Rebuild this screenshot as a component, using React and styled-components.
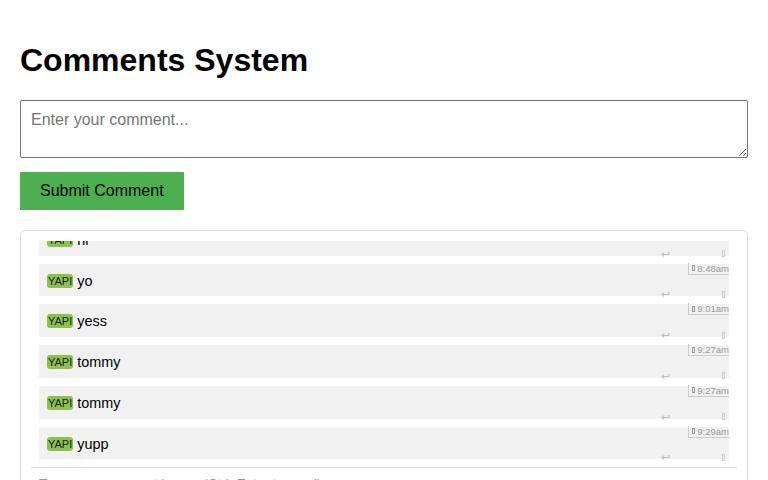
import React, { useEffect, useRef } from "react";
import styled, { createGlobalStyle } from "styled-components";

const GlobalStyle = createGlobalStyle`
  html, body {
    margin: 0;
    background: #fff;
  }
  body {
    padding: 20px;
    font-family: "Liberation Sans", Arial, sans-serif;
    color: #000;
  }
  * { box-sizing: border-box; }
`;

const comments = [
  { id: 1, user: "YAPI", text: "hello", time: "8:40am" },
  { id: 2, user: "YAPI", text: "hi", time: "8:45am" },
  { id: 3, user: "YAPI", text: "yo", time: "8:48am" },
  { id: 4, user: "YAPI", text: "yess", time: "9:01am" },
  { id: 5, user: "YAPI", text: "tommy", time: "9:27am" },
  { id: 6, user: "YAPI", text: "tommy", time: "9:27am" },
  { id: 7, user: "YAPI", text: "yupp", time: "9:29am" },
];

const Title = styled.h1`
  font-size: 32px;
  font-weight: bold;
  margin: 22px 0 21px;
  line-height: normal;
`;

const CommentInput = styled.textarea`
  display: block;
  width: 100%;
  height: 58px;
  padding: 10px;
  font-family: "Liberation Sans", Arial, sans-serif;
  font-size: 16px;
  border: 1px solid #767676;
  border-radius: 2px;
  margin: 0 0 14px;
  resize: vertical;
  &::placeholder { color: #757575; }
`;

const SubmitButton = styled.button`
  display: block;
  background: #4caf50;
  color: #000;
  border: none;
  padding: 10px 20px;
  font-family: "Liberation Sans", Arial, sans-serif;
  font-size: 16px;
  line-height: 18px;
  cursor: pointer;
`;

const Box = styled.div`
  margin-top: 20px;
  border: 1px solid #ddd;
  border-radius: 5px;
  padding: 10px;
  height: 300px;
`;

const List = styled.div`
  height: 226px;
  overflow: hidden;
  padding: 0 8px;
`;

const Item = styled.div`
  position: relative;
  background: #f1f1f1;
  padding: 8px 8px 6px;
  margin-bottom: 8px;
  font-size: 14.4px;
  line-height: 18.75px;
`;

const Badge = styled.span`
  display: inline-block;
  background: #8bc34a;
  color: #1a1a1a;
  font-size: 11px;
  line-height: 14px;
  padding: 0 1px;
  border-radius: 3px;
  margin-right: 4px;
  vertical-align: 1px;
`;

const Stamp = styled.span`
  position: absolute;
  top: -1px;
  right: 0;
  display: flex;
  align-items: center;
  gap: 2px;
  font-size: 9.5px;
  line-height: 11px;
  color: #999;
  padding: 0 0 0 3px;
  border-left: 1px solid #ccc;
  border-bottom: 1px solid #ccc;
`;

const Tofu = styled.span`
  display: inline-block;
  width: 3px;
  height: 7px;
  border: 1px solid ${(p) => p.color || "#aaa"};
`;

const Actions = styled.div`
  position: absolute;
  right: 4px;
  bottom: -3px;
  display: flex;
  align-items: center;
  gap: 52px;
  font-size: 11px;
  line-height: 10px;
  color: #bbb;
`;

const Footer = styled.div`
  border-top: 1px solid #ddd;
  padding: 8px 8px 0;
`;

const ReplyInput = styled.textarea`
  width: 100%;
  border: none;
  outline: none;
  resize: none;
  padding: 0;
  font-family: "Liberation Sans", Arial, sans-serif;
  font-size: 13.5px;
  &::placeholder { color: #999; }
`;

export default function App() {
  const listRef = useRef(null);

  useEffect(() => {
    if (listRef.current) listRef.current.scrollTop = listRef.current.scrollHeight;
  }, []);

  return (
    <>
      <GlobalStyle />
      <Title>Comments System</Title>
      <CommentInput placeholder="Enter your comment..." />
      <SubmitButton>Submit Comment</SubmitButton>
      <Box>
        <List ref={listRef}>
          {comments.map((c) => (
            <Item key={c.id}>
              <Stamp>
                <Tofu color="#999" style={{ height: 6 }} />
                {c.time}
              </Stamp>
              <Badge>{c.user}</Badge>
              {c.text}
              <Actions>
                <span>↩</span>
                <Tofu color="#ccc" />
              </Actions>
            </Item>
          ))}
        </List>
        <Footer>
          <ReplyInput rows={2} placeholder="Type your comment here... (Ctrl+Enter to send)" />
        </Footer>
      </Box>
    </>
  );
}
